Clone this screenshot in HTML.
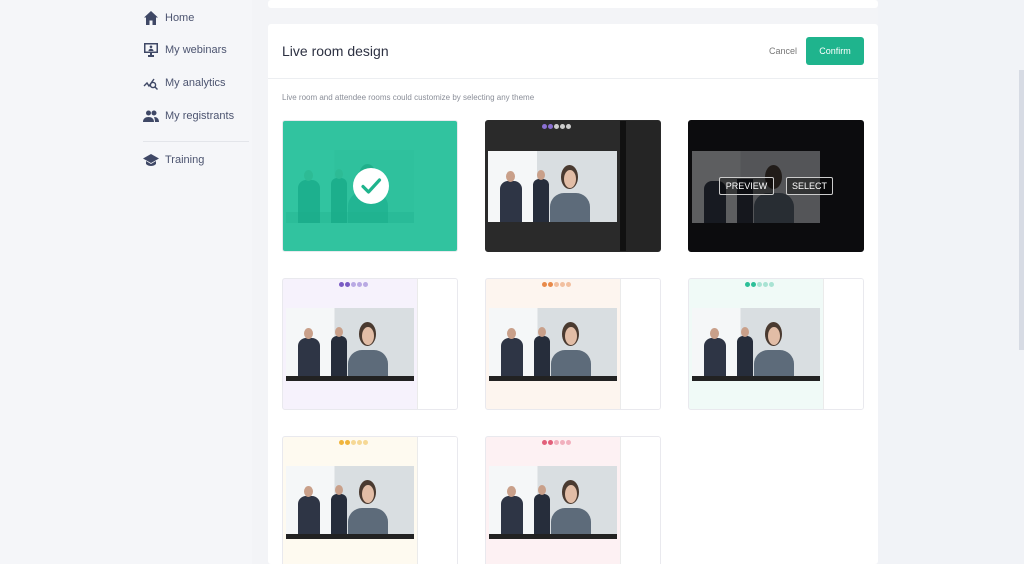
<!DOCTYPE html>
<html><head><style>
*{margin:0;padding:0;box-sizing:border-box}
html,body{width:1024px;height:564px;overflow:hidden}
body{background:#f3f4f7;font-family:"Liberation Sans",sans-serif;position:relative}
.side{position:absolute;left:0;top:0;width:252px;height:564px;background:#f5f6f9}
.nav{position:absolute;left:143px;font-size:11px;color:#4c5470;display:flex;align-items:center}
.nav svg{width:16px;height:16px;margin-right:6px;fill:#3f4866}
.hr{position:absolute;left:143px;top:141px;width:106px;height:1px;background:#e3e5ea}
.card{position:absolute;left:268px;width:610px;background:#fff;border-radius:3px}
.rightbg{position:absolute;left:878px;top:0;width:146px;height:564px;background:#f1f3f7}
.sb{position:absolute;left:1019px;top:70px;width:5px;height:280px;background:#d7dbe4}
h1{position:absolute;left:14px;top:19px;font-size:14px;font-weight:normal;color:#2d3142}
.cancel{position:absolute;left:501px;top:22px;font-size:9px;color:#777}
.confirm{position:absolute;left:538px;top:13px;width:58px;height:28px;background:#1fb48d;border-radius:3px;color:#fff;font-size:9px;text-align:center;line-height:28px}
.line{position:absolute;left:0;top:54px;width:610px;height:1px;background:#eceef1}
.desc{position:absolute;left:14px;top:69px;font-size:8px;color:#8a8e98}
.th{position:absolute;width:176px;height:132px;border-radius:3px;overflow:hidden;border:1px solid #e9e9ee}
.ph{position:absolute;left:3px;top:29px;width:128px;height:73px;overflow:hidden;background:linear-gradient(90deg,#f5f7f8 0 38%,#d9dee1 38% 100%)}
.ph i{position:absolute;display:block}
.pn{position:absolute;left:134px;top:0;width:42px;height:132px;background:#fff;border-left:1px solid rgba(0,0,0,.08)}
.dots{position:absolute;left:56px;top:3px;display:flex;gap:1px}
.dots b{width:5px;height:5px;border-radius:50%;display:block}
.ov{position:absolute;inset:0}
.btn{position:absolute;top:56px;height:18px;border:1px solid #ccc;border-radius:2px;color:#fff;font-size:9px;line-height:16px;text-align:center;background:rgba(0,0,0,.4)}
</style></head><body>
<div class="side"></div>
<div class="nav" style="top:10px"><svg viewBox="0 0 16 16"><path d="M8 1L1 7.5h2V15h3.5v-4.5h3V15H13V7.5h2z"/></svg>Home</div>
<div class="nav" style="top:42px"><svg viewBox="0 0 16 16"><path d="M1 1h14v10H9v2h2v2H5v-2h2v-2H1zM2.5 2.5v7h11v-7z M8 3.5a1.3 1.3 0 110 2.6 1.3 1.3 0 010-2.6zM5.5 9c0-1.5 1.2-2.3 2.5-2.3S10.5 7.5 10.5 9z"/></svg>My webinars</div>
<div class="nav" style="top:75px"><svg viewBox="0 0 16 16" fill="none"><path d="M1 11l3-3 2 3 5-7" stroke="#3f4866" stroke-width="1.4" fill="none"/><circle cx="10" cy="10" r="2.6" stroke="#3f4866" stroke-width="1.4" fill="none"/><path d="M12 12l2.5 2.5" stroke="#3f4866" stroke-width="1.4"/></svg>My analytics</div>
<div class="nav" style="top:108px"><svg viewBox="0 0 16 16"><circle cx="5.5" cy="5" r="2.5"/><circle cx="11" cy="5" r="2.5"/><path d="M0 14c0-3.5 2.5-5 5.5-5s5.5 1.5 5.5 5z M11 9c3 0 5 1.5 5 5h-4c0-2-.5-3.5-1-5z"/></svg>My registrants</div>
<div class="hr"></div>
<div class="nav" style="top:152px"><svg viewBox="0 0 16 16"><path d="M8 2L0 6.5 8 11l8-4.5z M3 9v3c1.5 1.5 3.5 2 5 2s3.5-.5 5-2V9l-5 3z"/></svg>Training</div>
<div class="rightbg"></div><div class="sb"></div>
<div class="card" style="top:0;height:8px"></div>
<div class="card" style="top:24px;height:540px">
<h1>Live room design</h1>
<div class="cancel">Cancel</div>
<div class="confirm">Confirm</div>
<div class="line"></div>
<div class="desc">Live room and attendee rooms could customize by selecting any theme</div>
</div>

<div class="th" style="left:282px;top:120px;background:#eef6f3">
 <div class="ph"><i style="left:12px;top:30px;width:22px;height:50px;background:#2e3545;border-radius:8px 8px 0 0"></i><i style="left:18px;top:20px;width:9px;height:11px;background:#c9a08a;border-radius:50%"></i><i style="left:45px;top:28px;width:16px;height:50px;background:#262d3b;border-radius:6px 6px 0 0"></i><i style="left:49px;top:19px;width:8px;height:10px;background:#c9a08a;border-radius:50%"></i><i style="left:62px;top:42px;width:40px;height:40px;background:#5d6b7a;border-radius:14px 14px 0 0"></i><i style="left:73px;top:14px;width:17px;height:24px;background:#4a3a30;border-radius:50%"></i><i style="left:76px;top:19px;width:12px;height:18px;background:#e2bda6;border-radius:50%"></i><i style="left:0;top:62px;width:128px;height:11px;background:rgba(0,0,0,.25)"></i></div>
 <div class="ov" style="background:rgba(28,190,150,.9)"></div>
 <div style="position:absolute;left:70px;top:47px;width:36px;height:36px;border-radius:50%;background:#fff"><svg viewBox="0 0 36 36" width="36" height="36"><path d="M10 18.5l5.5 5.5 11-12" stroke="#1fb48d" stroke-width="3.2" fill="none" stroke-linecap="round" stroke-linejoin="round"/></svg></div>
</div>

<div class="th" style="left:485px;top:120px;background:#2a2a2a;border-color:#2a2a2a">
 <div style="position:absolute;left:134px;top:0;width:6px;height:132px;background:#111"></div>
 <div style="position:absolute;left:140px;top:0;width:36px;height:132px;background:#252525"></div>
 <div class="dots"><b style="background:#8a6fd1"></b><b style="background:#8a6fd1"></b><b style="background:#ccc"></b><b style="background:#ccc"></b><b style="background:#ccc"></b></div>
 <div class="ph" style="left:2px;top:30px;width:129px;height:71px"><i style="left:12px;top:30px;width:22px;height:50px;background:#2e3545;border-radius:8px 8px 0 0"></i><i style="left:18px;top:20px;width:9px;height:11px;background:#c9a08a;border-radius:50%"></i><i style="left:45px;top:28px;width:16px;height:50px;background:#262d3b;border-radius:6px 6px 0 0"></i><i style="left:49px;top:19px;width:8px;height:10px;background:#c9a08a;border-radius:50%"></i><i style="left:62px;top:42px;width:40px;height:40px;background:#5d6b7a;border-radius:14px 14px 0 0"></i><i style="left:73px;top:14px;width:17px;height:24px;background:#4a3a30;border-radius:50%"></i><i style="left:76px;top:19px;width:12px;height:18px;background:#e2bda6;border-radius:50%"></i></div>
</div>

<div class="th" style="left:688px;top:120px;background:#0c0c0e;border-color:#0c0c0e">
 <div class="ph" style="top:30px;height:72px;opacity:.35"><i style="left:12px;top:30px;width:22px;height:50px;background:#2e3545;border-radius:8px 8px 0 0"></i><i style="left:45px;top:28px;width:16px;height:50px;background:#262d3b"></i><i style="left:62px;top:42px;width:40px;height:40px;background:#5d6b7a;border-radius:14px 14px 0 0"></i><i style="left:73px;top:14px;width:17px;height:24px;background:#4a3a30;border-radius:50%"></i></div>
 <div class="btn" style="left:30px;width:55px">PREVIEW</div>
 <div class="btn" style="left:97px;width:47px">SELECT</div>
</div>

<div class="th" style="left:282px;top:278px;background:#f6f2fc">
 <div class="pn"></div><div class="dots"><b style="background:#7a5cc4"></b><b style="background:#7a5cc4"></b><b style="background:#b9a9e3"></b><b style="background:#b9a9e3"></b><b style="background:#b9a9e3"></b></div>
 <div class="ph"><i style="left:12px;top:30px;width:22px;height:50px;background:#2e3545;border-radius:8px 8px 0 0"></i><i style="left:18px;top:20px;width:9px;height:11px;background:#c9a08a;border-radius:50%"></i><i style="left:45px;top:28px;width:16px;height:50px;background:#262d3b;border-radius:6px 6px 0 0"></i><i style="left:49px;top:19px;width:8px;height:10px;background:#c9a08a;border-radius:50%"></i><i style="left:62px;top:42px;width:40px;height:40px;background:#5d6b7a;border-radius:14px 14px 0 0"></i><i style="left:73px;top:14px;width:17px;height:24px;background:#4a3a30;border-radius:50%"></i><i style="left:76px;top:19px;width:12px;height:18px;background:#e2bda6;border-radius:50%"></i><i style="left:0;top:68px;width:128px;height:5px;background:#222"></i></div>
</div>
<div class="th" style="left:485px;top:278px;background:#fdf5ef">
 <div class="pn"></div><div class="dots"><b style="background:#e88a4a"></b><b style="background:#e88a4a"></b><b style="background:#f2c0a0"></b><b style="background:#f2c0a0"></b><b style="background:#f2c0a0"></b></div>
 <div class="ph"><i style="left:12px;top:30px;width:22px;height:50px;background:#2e3545;border-radius:8px 8px 0 0"></i><i style="left:18px;top:20px;width:9px;height:11px;background:#c9a08a;border-radius:50%"></i><i style="left:45px;top:28px;width:16px;height:50px;background:#262d3b;border-radius:6px 6px 0 0"></i><i style="left:49px;top:19px;width:8px;height:10px;background:#c9a08a;border-radius:50%"></i><i style="left:62px;top:42px;width:40px;height:40px;background:#5d6b7a;border-radius:14px 14px 0 0"></i><i style="left:73px;top:14px;width:17px;height:24px;background:#4a3a30;border-radius:50%"></i><i style="left:76px;top:19px;width:12px;height:18px;background:#e2bda6;border-radius:50%"></i><i style="left:0;top:68px;width:128px;height:5px;background:#222"></i></div>
</div>
<div class="th" style="left:688px;top:278px;background:#f0faf7">
 <div class="pn"></div><div class="dots"><b style="background:#2dbf98"></b><b style="background:#2dbf98"></b><b style="background:#a8e3d3"></b><b style="background:#a8e3d3"></b><b style="background:#a8e3d3"></b></div>
 <div class="ph"><i style="left:12px;top:30px;width:22px;height:50px;background:#2e3545;border-radius:8px 8px 0 0"></i><i style="left:18px;top:20px;width:9px;height:11px;background:#c9a08a;border-radius:50%"></i><i style="left:45px;top:28px;width:16px;height:50px;background:#262d3b;border-radius:6px 6px 0 0"></i><i style="left:49px;top:19px;width:8px;height:10px;background:#c9a08a;border-radius:50%"></i><i style="left:62px;top:42px;width:40px;height:40px;background:#5d6b7a;border-radius:14px 14px 0 0"></i><i style="left:73px;top:14px;width:17px;height:24px;background:#4a3a30;border-radius:50%"></i><i style="left:76px;top:19px;width:12px;height:18px;background:#e2bda6;border-radius:50%"></i><i style="left:0;top:68px;width:128px;height:5px;background:#222"></i></div>
</div>
<div class="th" style="left:282px;top:436px;background:#fefaf0">
 <div class="pn"></div><div class="dots"><b style="background:#f0b43c"></b><b style="background:#f0b43c"></b><b style="background:#f6d895"></b><b style="background:#f6d895"></b><b style="background:#f6d895"></b></div>
 <div class="ph"><i style="left:12px;top:30px;width:22px;height:50px;background:#2e3545;border-radius:8px 8px 0 0"></i><i style="left:18px;top:20px;width:9px;height:11px;background:#c9a08a;border-radius:50%"></i><i style="left:45px;top:28px;width:16px;height:50px;background:#262d3b;border-radius:6px 6px 0 0"></i><i style="left:49px;top:19px;width:8px;height:10px;background:#c9a08a;border-radius:50%"></i><i style="left:62px;top:42px;width:40px;height:40px;background:#5d6b7a;border-radius:14px 14px 0 0"></i><i style="left:73px;top:14px;width:17px;height:24px;background:#4a3a30;border-radius:50%"></i><i style="left:76px;top:19px;width:12px;height:18px;background:#e2bda6;border-radius:50%"></i><i style="left:0;top:68px;width:128px;height:5px;background:#222"></i></div>
</div>
<div class="th" style="left:485px;top:436px;background:#fdf1f3">
 <div class="pn"></div><div class="dots"><b style="background:#e2607a"></b><b style="background:#e2607a"></b><b style="background:#f1b0bd"></b><b style="background:#f1b0bd"></b><b style="background:#f1b0bd"></b></div>
 <div class="ph"><i style="left:12px;top:30px;width:22px;height:50px;background:#2e3545;border-radius:8px 8px 0 0"></i><i style="left:18px;top:20px;width:9px;height:11px;background:#c9a08a;border-radius:50%"></i><i style="left:45px;top:28px;width:16px;height:50px;background:#262d3b;border-radius:6px 6px 0 0"></i><i style="left:49px;top:19px;width:8px;height:10px;background:#c9a08a;border-radius:50%"></i><i style="left:62px;top:42px;width:40px;height:40px;background:#5d6b7a;border-radius:14px 14px 0 0"></i><i style="left:73px;top:14px;width:17px;height:24px;background:#4a3a30;border-radius:50%"></i><i style="left:76px;top:19px;width:12px;height:18px;background:#e2bda6;border-radius:50%"></i><i style="left:0;top:68px;width:128px;height:5px;background:#222"></i></div>
</div>
</body></html>
